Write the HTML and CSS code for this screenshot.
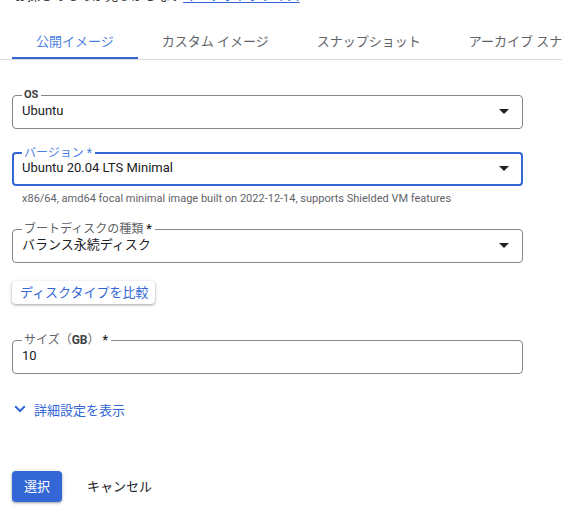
FILE: index.html
```html
<!DOCTYPE html>
<html lang="ja">
<head>
<meta charset="utf-8">
<link rel="stylesheet" href="styles.css">
</head>
<body>
<p class="notice">お探しのものが見つからない<a class="link" href="#">マーケットプレイス</a></p>
<div class="tabs">
  <div class="tab active">公開イメージ</div>
  <div class="tab">カスタム イメージ</div>
  <div class="tab">スナップショット</div>
  <div class="tab">アーカイブ スナップショット</div>
</div>
<div class="form">
  <fieldset class="field field-os">
    <legend class="label label-strong">OS</legend>
    <div class="control"><span class="value">Ubuntu</span><svg class="arrow" width="10" height="5" viewBox="0 0 10 5"><path d="M0 0h10L5 5z" fill="#202124"/></svg></div>
  </fieldset>
  <fieldset class="field field-focus">
    <legend class="label label-focus">バージョン *</legend>
    <div class="control"><span class="value">Ubuntu 20.04 LTS Minimal</span><svg class="arrow" width="10" height="5" viewBox="0 0 10 5"><path d="M0 0h10L5 5z" fill="#202124"/></svg></div>
  </fieldset>
  <div class="helper">x86/64, amd64 focal minimal image built on 2022-12-14, supports Shielded VM features</div>
  <fieldset class="field field-disk">
    <legend class="label">ブートディスクの種類 <span class="req">*</span></legend>
    <div class="control"><span class="value">バランス永続ディスク</span><svg class="arrow" width="10" height="5" viewBox="0 0 10 5"><path d="M0 0h10L5 5z" fill="#202124"/></svg></div>
  </fieldset>
  <div class="compare-row"><button class="btn-compare">ディスクタイプを比較</button></div>
  <fieldset class="field field-size">
    <legend class="label">サイズ（<b>GB</b>） <span class="req">*</span></legend>
    <div class="control"><span class="value">10</span></div>
  </fieldset>
  <div class="details">
    <svg class="chev" width="12" height="8" viewBox="0 0 12 8"><path d="M1.2 1.3L6 6l4.8-4.7" fill="none" stroke="#3367d6" stroke-width="2"/></svg>
    <span>詳細設定を表示</span>
  </div>
  <div class="actions">
    <button class="btn-primary">選択</button>
    <button class="btn-text">キャンセル</button>
  </div>
</div>
</body>
</html>
```
FILE: styles.css
```css
html, body {
  margin: 0;
  padding: 0;
  background: #fff;
  overflow: hidden;
}
body {
  font-family: Roboto, "Noto Sans CJK JP", sans-serif;
  color: #202124;
  width: 562px;
  height: 514px;
}
.notice {
  margin: -12px 0 0 14px;
  font-size: 13px;
  line-height: 16px;
  height: 16px;
  white-space: nowrap;
  color: #3c4043;
}
.link {
  color: #3367d6;
  text-decoration: underline;
  text-underline-offset: 2px;
}
.tabs {
  display: flex;
  margin-top: 16px;
  padding-left: 12px;
  border-bottom: 1px solid #dadce0;
  overflow: hidden;
  white-space: nowrap;
}
.tab {
  flex-shrink: 0;
  padding: 14px 24px 7px;
  font-size: 13px;
  line-height: 16px;
  color: #5f6368;
  border-bottom: 3px solid transparent;
  margin-bottom: -1px;
}
.tab.active {
  color: #4a7fe3;
  border-bottom-color: #3367d6;
}
.form {
  padding: 0 39px 0 12px;
}
.field {
  margin: 0;
  padding: 2px 9px 9px 7px;
  border: 1px solid #80868b;
  border-radius: 4px;
  min-width: 0;
}
.field-os { margin-top: 29px; }
.field-focus {
  margin-top: 18px;
  border: 2px solid #3367d6;
  padding: 1px 8px 8px 6px;
}
.field-disk { margin-top: 17px; }
.field-size { margin-top: 30px; }
.label {
  margin-left: 2px;
  padding: 0 3px 0 2px;
  font-size: 12px;
  line-height: 12px;
  color: #5f6368;
}
.label b { font-weight: 700; color: #3c4043; }
.label .req { color: #202124; font-weight: 700; }
.label-strong {
  font-size: 11px;
  font-weight: 700;
  color: #3c4043;
}
.label-focus {
  color: #4a7fe3;
}
.control {
  display: flex;
  align-items: center;
  justify-content: space-between;
  padding-left: 2px;
  height: 16px;
}
.value {
  font-size: 13px;
  line-height: 16px;
  color: #202124;
}
.arrow {
  margin-right: 4px;
  flex-shrink: 0;
}
.helper {
  margin-top: 6px;
  padding-left: 10px;
  font-size: 11px;
  line-height: 14px;
  color: #5f6368;
  white-space: nowrap;
}
.compare-row {
  margin-top: 18px;
  display: flex;
}
.btn-compare {
  font-family: inherit;
  font-size: 13px;
  line-height: 15px;
  padding: 4px 6px 4px 8px;
  border: none;
  border-radius: 4px;
  background: #fff;
  color: #3367d6;
  box-shadow: 0 1px 2px rgba(60,64,67,.3), 0 1px 3px 1px rgba(60,64,67,.15);
}
.details {
  margin-top: 25px;
  display: flex;
  align-items: center;
  height: 20px;
  padding-left: 2px;
  font-size: 13px;
  color: #3367d6;
}
.chev { margin-right: 8px; }
.actions {
  margin-top: 52px;
  display: flex;
  align-items: center;
}
.btn-primary {
  font-family: inherit;
  font-size: 13px;
  line-height: 31px;
  height: 31px;
  padding: 0 12px;
  border: none;
  border-radius: 4px;
  background: #3367d6;
  color: #fff;
  box-shadow: 0 1px 2px rgba(60,64,67,.3), 0 1px 3px 1px rgba(60,64,67,.15);
}
.btn-text {
  font-family: inherit;
  font-size: 13px;
  line-height: 31px;
  height: 31px;
  padding: 0 12px;
  margin-left: 13px;
  border: none;
  background: transparent;
  color: #202124;
}
```
